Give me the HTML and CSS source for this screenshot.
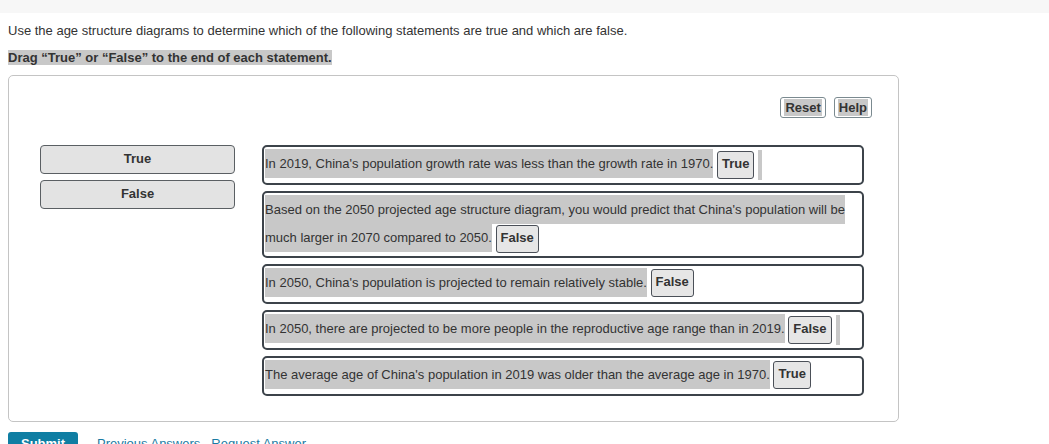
FILE: index.html
```html
<!DOCTYPE html>
<html lang="en">

<head>
    <meta charset="UTF-8">
    <meta name="viewport" content="width=device-width, initial-scale=1.0">
    <title>Age Structure Diagrams</title>
    <link rel="stylesheet" href="styles.css">
</head>

<body>
    <div class="topbar"></div>
    <div class="page">
        <p class="intro">Use the age structure diagrams to determine which of the following statements are true and which are false.</p>
        <p class="instruction"><span>Drag “True” or “False” to the end of each statement.</span></p>

        <div class="container">
            <div class="toolbar">
                <button class="tool-button"><span>Reset</span></button>
                <button class="tool-button"><span>Help</span></button>
            </div>
            <div class="board">
                <div class="bank">
                    <div class="bank-item">True</div>
                    <div class="bank-item">False</div>
                </div>
                <div class="targets">
                    <div class="statement"><span class="stmt-text">In 2019, China's population growth rate was less than the growth rate in 1970.</span> <span class="chip">True</span><span class="drop"></span></div>
                    <div class="statement"><span class="stmt-text">Based on the 2050 projected age structure diagram, you would predict that China's population will be much larger in 2070 compared to 2050.</span> <span class="chip">False</span></div>
                    <div class="statement"><span class="stmt-text">In 2050, China's population is projected to remain relatively stable.</span> <span class="chip">False</span></div>
                    <div class="statement"><span class="stmt-text">In 2050, there are projected to be more people in the reproductive age range than in 2019.</span> <span class="chip">False</span><span class="drop"></span></div>
                    <div class="statement"><span class="stmt-text">The average age of China's population in 2019 was older than the average age in 1970.</span> <span class="chip">True</span></div>
                </div>
            </div>
        </div>

        <div class="actions">
            <button class="submit">Submit</button>
            <a href="#" class="link">Previous Answers</a>
            <a href="#" class="link">Request Answer</a>
        </div>
    </div>
</body>

</html>
```

FILE: styles.css
```css
body {
    font-family: 'Liberation Sans', Arial, sans-serif;
    margin: 0;
    color: #333;
    font-size: 13px;
    background-color: #fff;
}

.topbar {
    height: 13px;
    background-color: #f7f7f7;
}

.page {
    padding: 0 8px;
}

.intro {
    margin: 10px 0 0;
    line-height: 15px;
}

.instruction {
    margin: 12px 0 0;
    line-height: 15px;
    font-weight: bold;
}

.instruction span {
    background-color: #c8c8c8;
}

.container {
    margin-top: 10px;
    width: 889px;
    border: 1px solid #c4c4c4;
    border-radius: 5px;
    padding-bottom: 25px;
}

.toolbar {
    display: flex;
    justify-content: flex-end;
    gap: 8px;
    margin-top: 21px;
    padding-right: 26px;
}

.tool-button {
    font-family: inherit;
    font-size: 13px;
    font-weight: bold;
    color: #333;
    background-color: #fff;
    border: 1px solid #7b8a90;
    border-radius: 3px;
    padding: 1px 3px;
    height: 21px;
    line-height: 17px;
}

.tool-button span {
    background-color: #c8c8c8;
    display: inline-block;
    padding: 0 1px;
}

.board {
    display: flex;
    margin-top: 27px;
    padding-left: 31px;
}

.bank {
    width: 195px;
    display: flex;
    flex-direction: column;
    gap: 6px;
}

.bank-item {
    height: 29px;
    box-sizing: border-box;
    border: 1px solid #5a5f63;
    border-radius: 4px;
    background-color: #e3e3e3;
    font-weight: bold;
    text-align: center;
    line-height: 25px;
}

.targets {
    width: 602px;
    margin-left: 27px;
    display: flex;
    flex-direction: column;
    gap: 6px;
}

.statement {
    box-sizing: border-box;
    min-height: 40px;
    border: 2px solid #3c434a;
    border-radius: 5px;
    padding: 3px 1px;
    line-height: 28px;
}

.stmt-text {
    background-color: #c8c8c8;
    padding: 7px 0;
}

.chip {
    display: inline-block;
    box-sizing: border-box;
    height: 28px;
    line-height: 24px;
    padding: 0 4px;
    border: 1px solid #4b5058;
    border-radius: 3px;
    background-color: #e6e6e6;
    font-weight: bold;
    vertical-align: middle;
}

.drop {
    display: inline-block;
    width: 4px;
    height: 30px;
    margin-left: 4px;
    background-color: #c8c8c8;
    vertical-align: middle;
}

.actions {
    display: flex;
    align-items: flex-start;
    gap: 11px;
    margin-top: 10px;
}

.submit {
    width: 70px;
    height: 32px;
    border: none;
    border-radius: 3px;
    background-color: #0f7ea3;
    color: #fff;
    font-family: inherit;
    font-size: 13px;
    font-weight: bold;
    line-height: 15px;
    padding: 4px 0 0;
    display: flex;
    justify-content: center;
    align-items: flex-start;
}

.link {
    color: #1a7ba3;
    font-size: 13px;
    line-height: 15px;
    text-decoration: none;
    margin-top: 4px;
}

.submit + .link {
    margin-left: 8px;
}
```
